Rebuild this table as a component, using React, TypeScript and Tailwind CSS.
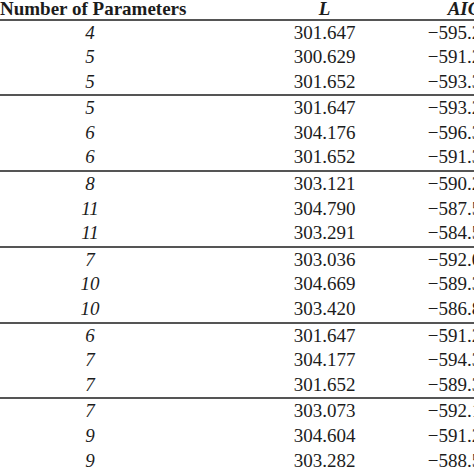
const groups = [
  [
    ['4', '301.647', '−595.294'],
    ['5', '300.629', '−591.258'],
    ['5', '301.652', '−593.304'],
  ],
  [
    ['5', '301.647', '−593.294'],
    ['6', '304.176', '−596.352'],
    ['6', '301.652', '−591.304'],
  ],
  [
    ['8', '303.121', '−590.242'],
    ['11', '304.790', '−587.580'],
    ['11', '303.291', '−584.582'],
  ],
  [
    ['7', '303.036', '−592.072'],
    ['10', '304.669', '−589.338'],
    ['10', '303.420', '−586.840'],
  ],
  [
    ['6', '301.647', '−591.294'],
    ['7', '304.177', '−594.354'],
    ['7', '301.652', '−589.304'],
  ],
  [
    ['7', '303.073', '−592.146'],
    ['9', '304.604', '−591.208'],
    ['9', '303.282', '−588.564'],
  ],
]

function Row({ cells, last }: { cells: string[]; last: boolean }) {
  return (
    <div className={`flex h-[24.6px] items-center leading-[24.6px] ${last ? 'h-[26.6px] border-b-2 border-[#555]' : ''}`}>
      <div className="w-[180px] shrink-0 text-center italic">{cells[0]}</div>
      <div className="ml-[76px] w-[137px] shrink-0 text-center">{cells[1]}</div>
      <div className="w-[142px] shrink-0 text-center">{cells[2]}</div>
    </div>
  )
}

export default function App() {
  return (
    <div className="h-[474px] w-[474px] overflow-hidden bg-white text-[19px] text-[#1c1c1c] [font-family:'Liberation_Serif',serif]">
      <div className="flex h-[20.5px] items-center border-b-2 border-[#555] pb-[2px] leading-[19px] font-bold">
        <div className="w-[180px] shrink-0 whitespace-nowrap text-center">Number of Parameters</div>
        <div className="ml-[76px] w-[137px] shrink-0 text-center italic">L</div>
        <div className="w-[142px] shrink-0 text-center italic">AIC</div>
      </div>
      {groups.map((g, gi) => (
        <div key={gi}>
          {g.map((r, ri) => (
            <Row key={ri} cells={r} last={ri === 2 && gi < groups.length - 1} />
          ))}
        </div>
      ))}
    </div>
  )
}
